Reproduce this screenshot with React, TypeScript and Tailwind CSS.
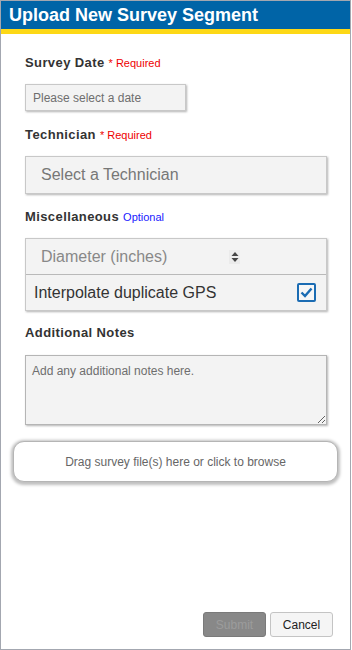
import React from "react";

function Label({ text, tag, tagClass }: { text: string; tag: string; tagClass: string }) {
  return (
    <div className="h-4 leading-4 text-[13px] font-bold text-[#333] tracking-[0.4px]">
      {text}
      <span className={`ml-1 text-[11px] font-normal tracking-normal ${tagClass}`}>{tag}</span>
    </div>
  );
}

export default function App() {
  return (
    <div
      className="w-[351px] h-[650px] border border-[#a3a7b0] bg-white flex flex-col"
      style={{ fontFamily: '"Liberation Sans", Arial, sans-serif' }}
    >
      <div className="h-[28px] bg-[#0064a7] flex items-center pl-[8px]">
        <span className="text-white font-bold text-[18px] leading-none">Upload New Survey Segment</span>
      </div>
      <div className="h-[5px] bg-[#fdd816]" />

      <div className="flex flex-col pl-[24px] pr-[23px] pt-[21px]">
        <Label text="Survey Date" tag="* Required" tagClass="text-[#ee0000]" />
        <div className="mt-[13px] w-[161px] h-[27px] bg-[#f3f3f3] border border-[#c8c8c8] shadow-[1px_1px_2px_rgba(0,0,0,0.3)] flex items-center pl-[7px] text-[12px] text-[#6e6e6e]">
          Please select a date
        </div>

        <div className="mt-[16px]">
          <Label text="Technician" tag="* Required" tagClass="text-[#ee0000]" />
        </div>
        <div className="mt-[13px] w-full h-[38px] bg-[#f3f3f3] border border-[#c8c8c8] shadow-[1px_1px_2px_rgba(0,0,0,0.3)] flex items-center pl-[15px] text-[16px] text-[#777]">
          Select a Technician
        </div>

        <div className="mt-[15px]">
          <Label text="Miscellaneous" tag="Optional" tagClass="text-[#1a1aff]" />
        </div>
        <div className="mt-[13px] w-full bg-[#f3f3f3] border border-[#c8c8c8] shadow-[1px_1px_2px_rgba(0,0,0,0.3)] flex flex-col">
          <div className="h-[36px] flex items-center pl-[15px] border-b border-[#b9b9b9] text-[16px] text-[#888]">
            <span className="w-[188px]">Diameter (inches)</span>
            <span className="w-[11px] h-[14px] bg-[#ebebeb] flex items-center justify-center">
              <svg width="8" height="12" viewBox="0 0 8 12">
                <path d="M4 1 L7.5 5 L0.5 5 Z" fill="#444" />
                <path d="M4 11 L7.5 7 L0.5 7 Z" fill="#444" />
              </svg>
            </span>
          </div>
          <div className="h-[35px] flex items-center justify-between pl-[8px] pr-[10px] text-[16px] text-[#333]">
            <span>Interpolate duplicate GPS</span>
            <span className="w-[19px] h-[19px] border-2 border-[#1b6cb3] rounded-[2px] bg-[#f7f7f7] flex items-center justify-center">
              <svg width="13" height="11" viewBox="0 0 13 11">
                <path d="M1.5 5.5 L5 9 L11.5 1.5" stroke="#1b6cb3" strokeWidth="2.4" fill="none" />
              </svg>
            </span>
          </div>
        </div>

        <div className="mt-[14px]">
          <Label text="Additional Notes" tag="" tagClass="" />
        </div>
        <textarea
          className="mt-[14px] w-full h-[70px] bg-[#f3f3f3] border border-[#b5b5b5] shadow-[1px_1px_2px_rgba(0,0,0,0.3)] pl-[6px] pt-[6px] text-[12px] text-[#333] placeholder:text-[#6e6e6e] outline-none"
          placeholder="Add any additional notes here."
        />
      </div>

      <div className="px-[12px] mt-[16px]">
        <div className="h-[41px] rounded-[11px] border border-[#b5b5b5] bg-white shadow-[0_1px_3px_2px_rgba(0,0,0,0.25)] flex items-center justify-center text-[12px] text-[#666]">
          Drag survey file(s) here or click to browse
        </div>
      </div>

      <div className="flex-1" />
      <div className="flex justify-end gap-[4px] pr-[17px] pb-[12px]">
        <button className="w-[63px] h-[25px] rounded-[3px] bg-[#888] border border-[#7a7a7a] text-[12px] text-[#9c9c9c]">
          Submit
        </button>
        <button className="w-[63px] h-[25px] rounded-[3px] bg-[#f5f5f5] border border-[#c4c4c4] text-[12px] text-[#222]">
          Cancel
        </button>
      </div>
    </div>
  );
}
